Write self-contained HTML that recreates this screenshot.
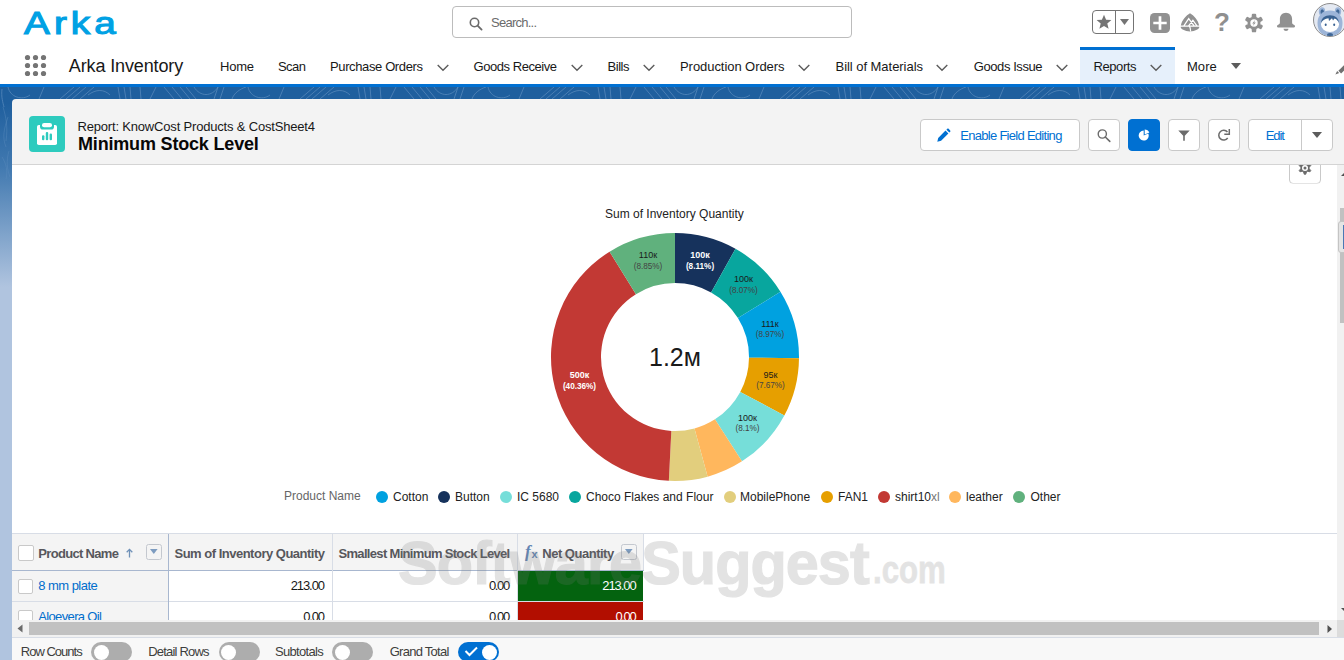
<!DOCTYPE html>
<html><head><meta charset="utf-8">
<style>
*{box-sizing:border-box;margin:0;padding:0}
html,body{width:1344px;height:660px;overflow:hidden;background:#b0c4df;font-family:"Liberation Sans",sans-serif;color:#181818}
.abs{position:absolute}
#hdr{left:0;top:0;width:1344px;height:84px;background:#fff}
#bluel{left:0;top:84px;width:1344px;height:3px;background:#0070d2}
#bgtop{left:0;top:87px;width:1344px;height:230px;background:linear-gradient(#1f5f9e 0px,#1f5f9e 16px,#4179b0 80px,#b0c4df 200px)}
.chev{top:64px;width:12px;height:8px}
#card{left:12px;top:99px;width:1332px;height:66px;background:#f3f3f3;border-bottom:1px solid #d4d4d4;border-radius:4px 0 0 0}
#main{left:12px;top:165px;width:1332px;height:472px;background:#fff}
#foot{left:12px;top:637px;width:1332px;height:23px;background:#f8f8f8;border-top:1px solid #d8dde6}
.btn{top:119px;height:32px;background:#fff;border:1px solid #c9c9c9;border-radius:4px}
.lg{top:490px;font-size:12px;line-height:14px;white-space:nowrap;color:#222}
.dot{top:491px;width:12px;height:12px;border-radius:50%}
.tg{top:642px;width:41px;height:20px;border-radius:10px;background:#adadad}
.tg i{position:absolute;left:2.500px;top:2.500px;width:15px;height:15px;border-radius:50%;background:#fff}
.cb{border:1px solid #c9c9c9;border-radius:2px;background:#fff}
</style></head><body>
<div class="abs" id="hdr"></div>
<div class="abs" id="bluel"></div>
<div class="abs" id="bgtop"></div>
<svg class="abs" style="left:0;top:87px" width="1344" height="200" viewBox="0 0 1344 200" fill="none" stroke="#5f8fc0" stroke-width="0.800" opacity="0.850">
<path d="M8 0c2 10 14 14 22 8M2 2c-1 8 1 14 2 18M44 0l-5 12M60 12l14-12M66 12l14-12M72 12l14-12M80 12l14-12M88 8c8-6 16-6 22 0M118 0l2 12M124 0l2 12M130 0l1 12M140 0l1 12M150 12l6-12M164 0l10 12M172 0l10 12M180 0l10 12M186 0l10 12M194 0c6 10 18 10 24 0M214 12l4-12M220 12l4-12M232 12c2-6 8-10 14-12"/>
<path d="M248 0c2 10 14 14 22 8M284 0l-5 12M300 12l14-12M306 12l14-12M312 12l14-12M320 12l14-12M328 8c8-6 16-6 22 0M358 0l2 12M364 0l2 12M370 0l1 12M380 0l1 12M390 12l6-12M404 0l10 12M412 0l10 12M420 0l10 12M426 0l10 12M434 0c6 10 18 10 24 0M454 12l4-12M460 12l4-12M472 12c2-6 8-10 14-12"/>
<path d="M488 0c2 10 14 14 22 8M524 0l-5 12M540 12l14-12M546 12l14-12M552 12l14-12M560 12l14-12M568 8c8-6 16-6 22 0M598 0l2 12M604 0l2 12M610 0l1 12M620 0l1 12M630 12l6-12M644 0l10 12M652 0l10 12M660 0l10 12M666 0l10 12M674 0c6 10 18 10 24 0M694 12l4-12M700 12l4-12M712 12c2-6 8-10 14-12"/>
<path d="M728 0c2 10 14 14 22 8M764 0l-5 12M780 12l14-12M786 12l14-12M792 12l14-12M800 12l14-12M808 8c8-6 16-6 22 0M838 0l2 12M844 0l2 12M850 0l1 12M860 0l1 12M870 12l6-12M884 0l10 12M892 0l10 12M900 0l10 12M906 0l10 12M914 0c6 10 18 10 24 0M934 12l4-12M940 12l4-12M952 12c2-6 8-10 14-12"/>
<path d="M968 0c2 10 14 14 22 8M1004 0l-5 12M1020 12l14-12M1026 12l14-12M1032 12l14-12M1040 12l14-12M1048 8c8-6 16-6 22 0M1078 0l2 12M1084 0l2 12M1090 0l1 12M1100 0l1 12M1110 12l6-12M1124 0l10 12M1132 0l10 12M1140 0l10 12M1146 0l10 12M1154 0c6 10 18 10 24 0M1174 12l4-12M1180 12l4-12M1192 12c2-6 8-10 14-12"/>
<path d="M1208 0c2 10 14 14 22 8M1244 0l-5 12M1260 12l14-12M1266 12l14-12M1272 12l14-12M1280 12l14-12M1288 8c8-6 16-6 22 0M1318 0l2 12M1324 0l2 12M1330 0l1 12M1340 0l1 12"/>
<path d="M3 20c3 10 5 20 3 34M8 30c-4 12-6 20-2 30M2 70c4 6 6 14 4 22M9 64c-3 10-2 18 1 26" opacity=".6"/>
</svg>
<div class="abs" style="left:23.700px;top:5px;font-size:31.200px;line-height:38px;color:#00a1e4;-webkit-text-stroke:1.100px #00a1e4;letter-spacing:3.300px;transform-origin:0 0;transform:scaleX(1.240);white-space:nowrap">Arka</div>
<div class="abs" style="left:452px;top:6px;width:400px;height:32px;border:1px solid #bcbcbc;border-radius:4px;background:#fff"></div>
<svg class="abs" style="left:469px;top:17px" width="14" height="14" viewBox="0 0 14 14"><circle cx="5.500" cy="5.500" r="4.200" fill="none" stroke="#6b6b6b" stroke-width="1.600"/><path d="M8.600 8.600l4 4" stroke="#6b6b6b" stroke-width="1.800" stroke-linecap="round"/></svg>
<div class="abs" style="left:491.00px;top:15px;font-size:13px;line-height:16px;letter-spacing:-0.750px;color:#6b6b6b;white-space:nowrap;">Search...</div>
<svg class="abs" style="left:24px;top:54px" width="23" height="23" viewBox="0 0 23 23" fill="#747474"><circle cx="3.5" cy="3.5" r="2.600"/><circle cx="3.5" cy="11.5" r="2.600"/><circle cx="3.5" cy="19.5" r="2.600"/><circle cx="11.5" cy="3.5" r="2.600"/><circle cx="11.5" cy="11.5" r="2.600"/><circle cx="11.5" cy="19.5" r="2.600"/><circle cx="19.5" cy="3.5" r="2.600"/><circle cx="19.5" cy="11.5" r="2.600"/><circle cx="19.5" cy="19.5" r="2.600"/></svg>
<div class="abs" style="left:68.75px;top:55px;font-size:18px;line-height:22px;letter-spacing:-0.123px;color:#181818;white-space:nowrap;">Arka Inventory</div>
<div class="abs" style="left:1080px;top:47px;width:95px;height:37px;background:#e6f0fb;border-top:3px solid #0070d2"></div>
<div class="abs" style="left:220.00px;top:59px;font-size:13px;line-height:16px;letter-spacing:-0.237px;color:#181818;white-space:nowrap;">Home</div>
<div class="abs" style="left:278.00px;top:59px;font-size:13px;line-height:16px;letter-spacing:-0.547px;color:#181818;white-space:nowrap;">Scan</div>
<div class="abs" style="left:330.00px;top:59px;font-size:13px;line-height:16px;letter-spacing:-0.377px;color:#181818;white-space:nowrap;">Purchase Orders</div>
<div class="abs" style="left:473.50px;top:59px;font-size:13px;line-height:16px;letter-spacing:-0.452px;color:#181818;white-space:nowrap;">Goods Receive</div>
<div class="abs" style="left:607.50px;top:59px;font-size:13px;line-height:16px;letter-spacing:-0.447px;color:#181818;white-space:nowrap;">Bills</div>
<div class="abs" style="left:680.00px;top:59px;font-size:13px;line-height:16px;letter-spacing:-0.058px;color:#181818;white-space:nowrap;">Production Orders</div>
<div class="abs" style="left:835.50px;top:59px;font-size:13px;line-height:16px;letter-spacing:-0.040px;color:#181818;white-space:nowrap;">Bill of Materials</div>
<div class="abs" style="left:973.75px;top:59px;font-size:13px;line-height:16px;letter-spacing:-0.418px;color:#181818;white-space:nowrap;">Goods Issue</div>
<div class="abs" style="left:1093.50px;top:59px;font-size:13px;line-height:16px;letter-spacing:-0.417px;color:#181818;white-space:nowrap;">Reports</div>
<div class="abs" style="left:1187.00px;top:59px;font-size:13px;line-height:16px;letter-spacing:0.037px;color:#181818;white-space:nowrap;">More</div>
<svg class="abs chev" style="left:436.5px"><path d="M.7 1l5.300 5.300L11.300 1" stroke="#5c5c5c" stroke-width="1.400" fill="none"/></svg>
<svg class="abs chev" style="left:570.5px"><path d="M.7 1l5.300 5.300L11.300 1" stroke="#5c5c5c" stroke-width="1.400" fill="none"/></svg>
<svg class="abs chev" style="left:642.5px"><path d="M.7 1l5.300 5.300L11.300 1" stroke="#5c5c5c" stroke-width="1.400" fill="none"/></svg>
<svg class="abs chev" style="left:798px"><path d="M.7 1l5.300 5.300L11.300 1" stroke="#5c5c5c" stroke-width="1.400" fill="none"/></svg>
<svg class="abs chev" style="left:936px"><path d="M.7 1l5.300 5.300L11.300 1" stroke="#5c5c5c" stroke-width="1.400" fill="none"/></svg>
<svg class="abs chev" style="left:1056px"><path d="M.7 1l5.300 5.300L11.300 1" stroke="#5c5c5c" stroke-width="1.400" fill="none"/></svg>
<svg class="abs chev" style="left:1150px"><path d="M.7 1l5.300 5.300L11.300 1" stroke="#5c5c5c" stroke-width="1.400" fill="none"/></svg>
<svg class="abs" style="left:1231px;top:63px" width="10" height="6"><path d="M0 0h10L5 6z" fill="#5c5c5c"/></svg>
<svg class="abs" style="left:1335px;top:61px" width="14" height="14" viewBox="0 0 14 14"><path d="M3.400 9.800L10.500 2.700 13.200 5.400 6.100 12.500z" fill="#707070"/><path d="M.4 13.400l1.700-3.500 2.100 2.100z" fill="#707070"/></svg>
<div class="abs" style="left:1092px;top:10px;width:42px;height:24px;border:1px solid #747474;border-radius:4px;background:#fff"></div>
<div class="abs" style="left:1115px;top:10px;width:1px;height:24px;background:#747474"></div>
<svg class="abs" style="left:1096px;top:14px" width="16" height="16" viewBox="0 0 16 16"><path d="M8 0.800l2.100 4.900 5.300.4-4.100 3.400 1.300 5.200L8 11.900l-4.600 2.800 1.300-5.200L.6 6.100l5.300-.4z" fill="#747474"/></svg>
<svg class="abs" style="left:1120px;top:19px" width="9" height="6" viewBox="0 0 9 6"><path d="M0 0h9L4.500 6z" fill="#747474"/></svg>
<div class="abs" style="left:1150px;top:13px;width:20px;height:20px;border-radius:4.500px;background:#919191"></div>
<svg class="abs" style="left:1150px;top:13px" width="20" height="20" viewBox="0 0 20 20"><path d="M10 3.300v13.400M3.300 10h13.400" stroke="#fff" stroke-width="2.700"/></svg>
<svg class="abs" style="left:1180px;top:12.500px" width="20" height="20" viewBox="0 0 20 20"><path d="M10 .3C6.200 2.400 1.700 7 .7 13.300C.5 14.800 1.200 15.800 2.600 16.400C5 17.600 7.500 18.400 10 18.400C12.500 18.400 15 17.600 17.400 16.400C18.800 15.800 19.500 14.800 19.300 13.300C18.300 7 13.800 2.400 10 .3z" fill="#919191"/><path d="M3.700 13.200L8.700 5.600l5.600 7.600M8.400 13.200L12.900 7.200l4.200 6M0 13.200h20M9.200 13.300c1.800 1.400 .8 3 1.500 5.200" stroke="#fff" stroke-width="1.200" fill="none"/></svg>
<div class="abs" style="left:1214px;top:7px;font-size:26px;line-height:30px;color:#8f8f8f;font-weight:bold">?</div>
<svg class="abs" style="left:1243.800px;top:12.900px" width="20" height="20" viewBox="0 0 20 20"><path d="M11.45 15.41L11.17 18.32L8.83 18.32L8.55 15.41L6.04 13.96L3.38 15.17L2.21 13.15L4.59 11.45L4.59 8.55L2.21 6.85L3.38 4.83L6.04 6.04L8.55 4.59L8.83 1.68L11.17 1.68L11.45 4.59L13.96 6.04L16.62 4.83L17.79 6.85L15.41 8.55L15.41 11.45L17.79 13.15L16.62 15.17L13.96 13.96Z" fill="#919191" stroke="#919191" stroke-width="2" stroke-linejoin="round"/><circle cx="10" cy="10" r="3.700" fill="#fff"/><path d="M11.200 6.900l-3 3.500h1.700l-1.100 2.700 3-3.600h-1.700z" fill="#919191"/></svg>
<svg class="abs" style="left:1276px;top:12px" width="20" height="21" viewBox="0 0 20 21"><path d="M10 .7C6.300 .7 3.900 3.500 3.900 7V10.500C3.900 11.800 3 12.600 1.800 13C1.200 13.200 1 13.500 1 14V14.600C1 15.100 1.400 15.400 1.900 15.400H18.100C18.600 15.400 19 15.100 19 14.600V14C19 13.500 18.800 13.200 18.200 13C17 12.600 16.100 11.800 16.100 10.500V7C16.100 3.500 13.700 .7 10 .7z" fill="#919191"/><path d="M7.500 16.800h5c-.2 1.400-1.200 2.200-2.500 2.200s-2.300-.8-2.500-2.200z" fill="#919191"/></svg>
<div class="abs" style="left:1313px;top:3px;width:34px;height:34px;border-radius:50%;background:#e4e9f2;border:1px solid #8c8c8c;overflow:hidden">
<svg style="position:absolute;left:-1px;top:-1px" width="34" height="34" viewBox="0 0 34 34"><ellipse cx="9" cy="8.500" rx="3.200" ry="4.200" fill="#9db5d8"/><ellipse cx="25" cy="8.500" rx="3.200" ry="4.200" fill="#9db5d8"/><ellipse cx="9.200" cy="9" rx="1.700" ry="2.700" fill="#3f6796"/><ellipse cx="24.800" cy="9" rx="1.700" ry="2.700" fill="#3f6796"/><path d="M17 7.500C9 7.500 4.500 13 4.500 20C4.500 27 8 34 17 34S29.500 27 29.500 20C29.500 13 25 7.500 17 7.500z" fill="#9db5d8"/><ellipse cx="17" cy="21.500" rx="9" ry="7.600" fill="#fff"/><path d="M8.200 20C8 15 12 12.200 17 12.200S26 15 25.800 20C25 17.500 23.500 16 21.500 15.500L20 17.500 19 15.200 16 18 15.500 15.300C12 15.800 9.500 17 8.200 20z" fill="#3a6291"/><ellipse cx="12.700" cy="21.800" rx="1" ry="1.300" fill="#3a6291"/><ellipse cx="21.200" cy="21.800" rx="1" ry="1.300" fill="#3a6291"/><ellipse cx="17" cy="32" rx="3" ry="2" fill="#3f6796"/></svg></div>
<div class="abs" id="card"></div>
<div class="abs" id="main"></div>
<div class="abs" style="left:29px;top:116px;width:36px;height:36px;border-radius:4px;background:#2ecbbe"></div>
<svg class="abs" style="left:36px;top:122px" width="22" height="24" viewBox="0 0 22 24"><rect x="1" y="3" width="20" height="20" rx="1.800" fill="#fff"/><path d="M4 2.500v2.300a2.800 2.800 0 0 0 2.800 2.800h8.400a2.800 2.800 0 0 0 2.800-2.800V2.500z" fill="#2ecbbe"/><rect x="6" y="1" width="10" height="4.300" rx="2.100" fill="#fff"/><rect x="6" y="13.200" width="2.400" height="5.100" rx="1.100" fill="#2ecbbe"/><rect x="9.800" y="10" width="2.400" height="8.300" rx="1.100" fill="#2ecbbe"/><rect x="13.600" y="11.600" width="2.400" height="6.700" rx="1.100" fill="#2ecbbe"/></svg>
<div class="abs" style="left:77.50px;top:119px;font-size:13px;line-height:16px;letter-spacing:-0.183px;color:#181818;white-space:nowrap;">Report: KnowCost Products &amp; CostSheet4</div>
<div class="abs" style="left:78.00px;top:133px;font-size:18px;line-height:22px;letter-spacing:-0.178px;color:#080707;white-space:nowrap;font-weight:bold;">Minimum Stock Level</div>
<div class="abs btn" style="left:920px;width:160px"></div>
<svg class="abs" style="left:937px;top:128px" width="14" height="14" viewBox="0 0 14 14"><path d="M.3 13.700l.9-3.800 7.300-7.300 2.900 2.900-7.300 7.300zM9.400 1.700l.9-.9c.4-.4.900-.4 1.300 0l1.600 1.600c.4.400.4.900 0 1.300l-.9.900z" fill="#0070d2"/></svg>
<div class="abs btn" style="left:1088px;width:32px"></div>
<svg class="abs" style="left:1096px;top:127.500px" width="16" height="16" viewBox="0 0 16 16"><circle cx="6.300" cy="6" r="4.100" fill="none" stroke="#6b6b6b" stroke-width="1.400"/><path d="M9.300 9l4.500 4.400" stroke="#6b6b6b" stroke-width="1.600" stroke-linecap="round"/></svg>
<div class="abs btn" style="left:1128px;width:32px;background:#0070d2;border-color:#0070d2"></div>
<svg class="abs" style="left:1137px;top:127px" width="14" height="14" viewBox="0 0 14 14"><path d="M6.700 8.600L6.700 3.600A5 5 0 1 0 11.230 6.490Z" fill="#fff"/><path d="M7.700 7.600L7.700 2.500A5.100 5.100 0 0 1 12.320 5.440Z" fill="#fff"/></svg>
<div class="abs btn" style="left:1168px;width:32px"></div>
<svg class="abs" style="left:1178px;top:129.500px" width="12" height="11" viewBox="0 0 12 11"><path d="M.3 .5h11.400L6.800 5.800v5H5.200v-5z" fill="#6b6b6b"/></svg>
<div class="abs btn" style="left:1208px;width:32px"></div>
<svg class="abs" style="left:1217px;top:128px" width="14" height="14" viewBox="0 0 14 14"><path d="M10.450 4.050A4.900 4.900 0 1 0 10.700 10" fill="none" stroke="#6b6b6b" stroke-width="1.500"/><path d="M12.300 1v5.300H7.300" fill="none" stroke="#6b6b6b" stroke-width="1.500"/></svg>
<div class="abs btn" style="left:1248px;width:85px"></div>
<div class="abs" style="left:1301px;top:119px;width:1px;height:32px;background:#c9c9c9"></div>
<svg class="abs" style="left:1312px;top:132px" width="10" height="6"><path d="M0 0h10L5 6z" fill="#5c5c5c"/></svg>
<div class="abs" style="left:960.30px;top:128px;font-size:13px;line-height:16px;letter-spacing:-0.714px;color:#0070d2;white-space:nowrap;">Enable Field Editing</div>
<div class="abs" style="left:1265.70px;top:128px;font-size:13px;line-height:16px;letter-spacing:-1.063px;color:#0070d2;white-space:nowrap;">Edit</div>
<div class="abs" style="left:1289px;top:150px;width:32px;height:33.500px;border:1px solid #c9c9c9;border-radius:4px;background:#fff;clip-path:inset(15px 0 0 0)"></div>
<svg class="abs" style="left:1298px;top:161.200px;clip-path:inset(3.800px 0 0 0)" width="14" height="14" viewBox="0 0 14 14"><path d="M11.23 7.75L12.80 9.46L12.03 10.79L9.76 10.29L8.47 11.04L7.77 13.25L6.23 13.25L5.53 11.04L4.24 10.29L1.97 10.79L1.20 9.46L2.77 7.75L2.77 6.25L1.20 4.54L1.97 3.21L4.24 3.71L5.53 2.96L6.23 0.75L7.77 0.75L8.47 2.96L9.76 3.71L12.03 3.21L12.80 4.54L11.23 6.25Z" fill="#6b6b6b" stroke="#6b6b6b" stroke-width="0.900" stroke-linejoin="round"/><circle cx="7" cy="7" r="3" fill="#fff"/><circle cx="7" cy="7" r="1.500" fill="#6b6b6b"/></svg>
<div class="abs" style="left:605px;top:207px;font-size:12px;line-height:14px;color:#222;white-space:nowrap">Sum of Inventory Quantity</div>
<svg class="abs" style="left:0;top:0" width="1344" height="660" viewBox="0 0 1344 660">
<path d="M675.00 233.00A124 124 0 0 1 735.49 248.75L711.10 292.40A74 74 0 0 0 675.00 283.00Z" fill="#16325c"/>
<path d="M735.49 248.75A124 124 0 0 1 780.44 291.75L737.92 318.06A74 74 0 0 0 711.10 292.40Z" fill="#08a69e"/>
<path d="M780.44 291.75A124 124 0 0 1 798.99 358.17L749.00 357.70A74 74 0 0 0 737.92 318.06Z" fill="#00a1e0"/>
<path d="M798.99 358.17A124 124 0 0 1 784.33 415.50L740.25 391.91A74 74 0 0 0 749.00 357.70Z" fill="#e69f00"/>
<path d="M784.33 415.50A124 124 0 0 1 741.97 461.36L714.96 419.28A74 74 0 0 0 740.25 391.91Z" fill="#76ded9"/>
<path d="M741.97 461.36A124 124 0 0 1 707.65 476.63L694.48 428.39A74 74 0 0 0 714.96 419.28Z" fill="#ffb75d"/>
<path d="M707.65 476.63A124 124 0 0 1 668.85 480.85L671.33 430.91A74 74 0 0 0 694.48 428.39Z" fill="#e2ce7d"/>
<path d="M668.85 480.85A124 124 0 0 1 609.55 251.68L635.94 294.15A74 74 0 0 0 671.33 430.91Z" fill="#c23934"/>
<path d="M609.55 251.68A124 124 0 0 1 675.00 233.00L675.00 283.00A74 74 0 0 0 635.94 294.15Z" fill="#60b17d"/>
<g font-family="Liberation Sans, sans-serif" font-size="9" text-anchor="middle">
<text x="700" y="258.300" fill="#fff" font-weight="bold">100к</text><text x="700" y="268.800" fill="#fff" font-weight="bold" font-size="8.200">(8.11%)</text>
<text x="743.500" y="282.300" fill="#1a1a1a">100к</text><text x="743.500" y="293" fill="#444" font-size="8.200">(8.07%)</text>
<text x="770" y="326.800" fill="#1a1a1a">111к</text><text x="770" y="337.300" fill="#444" font-size="8.200">(8.97%)</text>
<text x="770.500" y="378" fill="#1a1a1a">95к</text><text x="770.500" y="388" fill="#444" font-size="8.200">(7.67%)</text>
<text x="747.500" y="420.500" fill="#1a1a1a">100к</text><text x="747.500" y="431" fill="#444" font-size="8.200">(8.1%)</text>
<text x="579.500" y="378.200" fill="#fff" font-weight="bold">500к</text><text x="579.500" y="388.800" fill="#fff" font-weight="bold" font-size="8.200">(40.36%)</text>
<text x="648" y="258.300" fill="#1a1a1a">110к</text><text x="648" y="268.800" fill="#444" font-size="8.200">(8.85%)</text>
</g>
<text x="675" y="365.500" font-family="Liberation Sans, sans-serif" font-size="25" text-anchor="middle" fill="#1a1a1a">1.2м</text>
</svg>
<div class="abs lg" style="left:284px;top:489px;color:#666">Product Name</div>
<div class="abs dot" style="left:376px;background:#00a1e0"></div><div class="abs lg" style="left:393px">Cotton</div>
<div class="abs dot" style="left:438px;background:#16325c"></div><div class="abs lg" style="left:455px">Button</div>
<div class="abs dot" style="left:500px;background:#76ded9"></div><div class="abs lg" style="left:517px">IC 5680</div>
<div class="abs dot" style="left:569px;background:#08a69e"></div><div class="abs lg" style="left:586px">Choco Flakes and Flour</div>
<div class="abs dot" style="left:724px;background:#e2ce7d"></div><div class="abs lg" style="left:740px">MobilePhone</div>
<div class="abs dot" style="left:820.5px;background:#e69f00"></div><div class="abs lg" style="left:838px">FAN1</div>
<div class="abs dot" style="left:877.5px;background:#c23934"></div><div class="abs lg" style="left:895px">shirt10<span style="color:#777">xl</span></div>
<div class="abs dot" style="left:949px;background:#ffb75d"></div><div class="abs lg" style="left:966px">leather</div>
<div class="abs dot" style="left:1013px;background:#60b17d"></div><div class="abs lg" style="left:1030.5px">Other</div>
<div class="abs" style="left:12px;top:533px;width:1325px;height:1px;background:#d8dde6"></div>
<div class="abs" style="left:12px;top:534px;width:632px;height:36px;background:#f4f4f4"></div>
<div class="abs" style="left:12px;top:570px;width:156px;height:50px;background:#f4f4f4"></div>
<div class="abs" style="left:12px;top:570px;width:632px;height:1px;background:#a8b7cf"></div>
<div class="abs" style="left:12px;top:601px;width:632px;height:1px;background:#d8dde6"></div>
<div class="abs" style="left:168px;top:534px;width:1px;height:86px;background:#a8b7cf"></div>
<div class="abs" style="left:332px;top:534px;width:1px;height:86px;background:#d8dde6"></div>
<div class="abs" style="left:517px;top:534px;width:1px;height:86px;background:#d8dde6"></div>
<div class="abs" style="left:643px;top:534px;width:1px;height:36px;background:#d8dde6"></div>
<div class="abs" style="left:518px;top:571px;width:125px;height:30px;background:#04630f"></div>
<div class="abs" style="left:518px;top:602px;width:125px;height:18px;background:#b20e00"></div>
<div class="abs cb" style="left:18px;top:545px;width:16px;height:16px"></div>
<div class="abs cb" style="left:18px;top:579px;width:15px;height:15px"></div>
<div class="abs cb" style="left:18px;top:610px;width:15px;height:15px"></div>
<svg class="abs" style="left:125.300px;top:548px" width="9" height="11" viewBox="0 0 9 11"><path d="M4.500 9.500V1.500M1.700 4.300L4.500 1.400 7.300 4.300" stroke="#6f91b8" stroke-width="1.300" fill="none"/></svg>
<div class="abs" style="left:146px;top:544px;width:16px;height:16px;border:1px solid #c4c8cf;border-radius:2.500px;background:#f4f4f4"></div>
<svg class="abs" style="left:150.200px;top:549.400px" width="8" height="5"><path d="M0 0h7.600L3.800 5z" fill="#7d9cc0"/></svg>
<div class="abs" style="left:525px;top:543px;font-family:'Liberation Serif',serif;font-style:italic;font-size:17px;line-height:18px;font-weight:bold;color:#6385b3">f</div>
<div class="abs" style="left:531.500px;top:548px;font-size:11px;line-height:13px;font-weight:bold;color:#6385b3">x</div>
<div class="abs" style="left:621px;top:544px;width:16px;height:16px;border:1px solid #c4c8cf;border-radius:2.500px;background:#f4f4f4"></div>
<svg class="abs" style="left:625.200px;top:549.400px" width="8" height="5"><path d="M0 0h7.600L3.800 5z" fill="#7d9cc0"/></svg>
<div class="abs" style="left:38.25px;top:546px;font-size:13px;line-height:16px;letter-spacing:-0.672px;color:#57575c;white-space:nowrap;font-weight:bold;">Product Name</div>
<div class="abs" style="left:174.50px;top:546px;font-size:13px;line-height:16px;letter-spacing:-0.500px;color:#57575c;white-space:nowrap;font-weight:bold;">Sum of Inventory Quantity</div>
<div class="abs" style="left:338.50px;top:546px;font-size:13px;line-height:16px;letter-spacing:-0.678px;color:#57575c;white-space:nowrap;font-weight:bold;">Smallest Minimum Stock Level</div>
<div class="abs" style="left:542.25px;top:546px;font-size:13px;line-height:16px;letter-spacing:-0.486px;color:#57575c;white-space:nowrap;font-weight:bold;">Net Quantity</div>
<div class="abs" style="left:38.25px;top:578px;font-size:13px;line-height:16px;letter-spacing:-0.539px;color:#006dcc;white-space:nowrap;">8 mm plate</div>
<div class="abs" style="left:38.25px;top:609px;font-size:13px;line-height:16px;letter-spacing:-0.645px;color:#006dcc;white-space:nowrap;">Aloevera Oil</div>
<div class="abs" style="left:290.75px;top:578px;font-size:13px;line-height:16px;letter-spacing:-1.106px;color:#181818;white-space:nowrap;">213.00</div>
<div class="abs" style="left:303.25px;top:609px;font-size:13px;line-height:16px;letter-spacing:-1.200px;color:#181818;white-space:nowrap;">0.00</div>
<div class="abs" style="left:489.00px;top:578px;font-size:13px;line-height:16px;letter-spacing:-1.367px;color:#181818;white-space:nowrap;">0.00</div>
<div class="abs" style="left:489.00px;top:609px;font-size:13px;line-height:16px;letter-spacing:-1.367px;color:#181818;white-space:nowrap;">0.00</div>
<div class="abs" style="left:602.25px;top:578px;font-size:13px;line-height:16px;letter-spacing:-1.056px;color:#fff;white-space:nowrap;">213.00</div>
<div class="abs" style="left:615.50px;top:609px;font-size:13px;line-height:16px;letter-spacing:-1.367px;color:#fff;white-space:nowrap;">0.00</div>
<div class="abs" style="left:398px;top:524.500px;font-size:61.500px;line-height:76px;font-weight:bold;color:#787878;-webkit-text-stroke:1.200px #787878;opacity:.2;white-space:nowrap;letter-spacing:-1px;transform-origin:0 0;transform:scaleX(.966)">SoftwareSuggest</div>
<div class="abs" style="left:873px;top:546.500px;font-size:39px;line-height:46px;font-weight:bold;color:#787878;-webkit-text-stroke:.8px #787878;opacity:.2;white-space:nowrap;transform-origin:0 0;transform:scaleX(.8)">.com</div>
<div class="abs" style="left:12px;top:620px;width:1325px;height:17px;background:#f1f1f1"></div>
<div class="abs" style="left:1337px;top:620px;width:7px;height:17px;background:#dcdcdc"></div>
<div class="abs" style="left:29px;top:622px;width:1290px;height:13px;background:#c1c1c1"></div>
<svg class="abs" style="left:17px;top:624px" width="6" height="9"><path d="M5.500 .5v8L.5 4.500z" fill="#6a6a6a"/></svg>
<svg class="abs" style="left:1326.500px;top:624.500px" width="6" height="8"><path d="M.5 0v8l4.500-4z" fill="#505050"/></svg>
<div class="abs" style="left:1337px;top:165px;width:7px;height:455px;background:#f1f1f1"></div>
<div class="abs" style="left:1340px;top:208px;width:4px;height:115px;background:#c1c1c1"></div>
<div class="abs" style="left:1338px;top:221px;width:10px;height:32px;border:1px solid #c4c4c4;border-radius:3px;background:#e4e4e4"></div>
<div class="abs" style="left:1342.500px;top:225px;width:1.500px;height:24px;background:#4a78b5"></div>
<svg class="abs" style="left:1341px;top:173px" width="3" height="3"><path d="M0 3L3 0v3z" fill="#505050"/></svg>
<svg class="abs" style="left:1341px;top:608px" width="3" height="3"><path d="M0 0h3v3z" fill="#505050"/></svg>
<div class="abs" id="foot"></div>
<div class="abs" style="left:20.75px;top:644px;font-size:13px;line-height:16px;letter-spacing:-0.983px;color:#3e3e3c;white-space:nowrap;">Row Counts</div>
<div class="abs" style="left:148.25px;top:644px;font-size:13px;line-height:16px;letter-spacing:-0.804px;color:#3e3e3c;white-space:nowrap;">Detail Rows</div>
<div class="abs" style="left:275.00px;top:644px;font-size:13px;line-height:16px;letter-spacing:-0.683px;color:#3e3e3c;white-space:nowrap;">Subtotals</div>
<div class="abs" style="left:389.70px;top:644px;font-size:13px;line-height:16px;letter-spacing:-0.735px;color:#3e3e3c;white-space:nowrap;">Grand Total</div>
<div class="abs tg" style="left:91px"><i></i></div>
<div class="abs tg" style="left:218.5px"><i></i></div>
<div class="abs tg" style="left:332px"><i></i></div>
<div class="abs tg" style="left:458px;background:#0070d2"><i style="left:24px"></i></div>
<svg class="abs" style="left:464px;top:646px" width="15" height="11" viewBox="0 0 15 11"><path d="M1.500 5l4 4L13 1.500" stroke="#fff" stroke-width="2" fill="none"/></svg>
</body></html>
